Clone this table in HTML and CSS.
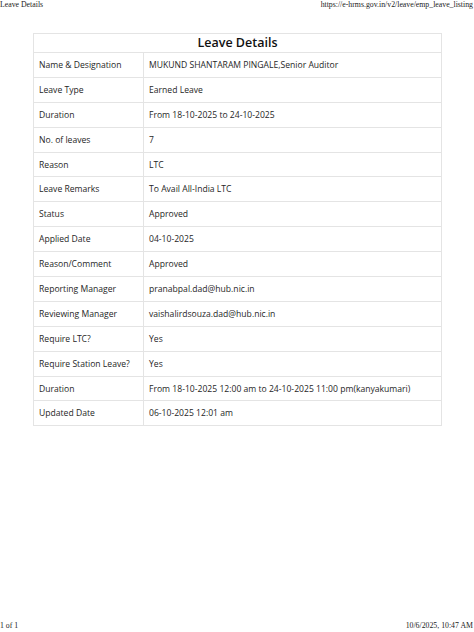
FILE: index.html
```html
<!DOCTYPE html>
<html>
<head>
<meta charset="utf-8">
<link rel="stylesheet" href="styles.css">
</head>
<body>
<div class="page">
  <header class="print-head">
    <span>Leave Details</span>
    <span class="url">https://e-hrms.gov.in/v2/leave/emp_leave_listing</span>
  </header>
  <main class="content">
    <table class="details">
      <tr><th colspan="2" class="title">Leave Details</th></tr>
      <tr><td class="label">Name &amp; Designation</td><td>MUKUND SHANTARAM PINGALE,Senior Auditor</td></tr>
      <tr><td class="label">Leave Type</td><td>Earned Leave</td></tr>
      <tr><td class="label">Duration</td><td>From 18-10-2025 to 24-10-2025</td></tr>
      <tr><td class="label">No. of leaves</td><td>7</td></tr>
      <tr><td class="label">Reason</td><td>LTC</td></tr>
      <tr><td class="label">Leave Remarks</td><td>To Avail All-India LTC</td></tr>
      <tr><td class="label">Status</td><td>Approved</td></tr>
      <tr><td class="label">Applied Date</td><td>04-10-2025</td></tr>
      <tr><td class="label">Reason/Comment</td><td>Approved</td></tr>
      <tr><td class="label">Reporting Manager</td><td>pranabpal.dad@hub.nic.in</td></tr>
      <tr><td class="label">Reviewing Manager</td><td>vaishalirdsouza.dad@hub.nic.in</td></tr>
      <tr><td class="label">Require LTC?</td><td>Yes</td></tr>
      <tr><td class="label">Require Station Leave?</td><td>Yes</td></tr>
      <tr><td class="label">Duration</td><td>From 18-10-2025 12:00 am to 24-10-2025 11:00 pm(kanyakumari)</td></tr>
      <tr><td class="label">Updated Date</td><td>06-10-2025 12:01 am</td></tr>
    </table>
  </main>
  <footer class="print-foot">
    <span>1 of 1</span>
    <span>10/6/2025, 10:47 AM</span>
  </footer>
</div>
</body>
</html>
```
FILE: styles.css
```css
html, body {
  margin: 0;
  padding: 0;
  background: #fff;
}
.page {
  width: 474px;
  height: 632px;
  display: flex;
  flex-direction: column;
  overflow: hidden;
}
.print-head, .print-foot {
  display: flex;
  justify-content: space-between;
  font-family: "Liberation Serif", serif;
  font-size: 7.8px;
  color: #222;
  white-space: nowrap;
  padding: 0 1px 0 0;
}
.print-head {
  height: 33px;
  line-height: 10px;
}
.content {
  flex: 1;
  padding-left: 33px;
}
.print-foot {
  height: 12px;
  line-height: 12px;
  align-items: flex-end;
}
.details {
  border-collapse: collapse;
  width: 409px;
  font-family: "Open Sans", sans-serif;
  font-size: 8.6px;
  color: #262626;
}
.details th, .details td {
  border: 1px solid #e4e4e4;
  text-align: left;
  padding: 0 5px;
  height: 23.9px;
  white-space: nowrap;
}
.details .title {
  text-align: center;
  font-size: 12.5px;
  font-weight: 600;
  color: #111;
  height: 18px;
  line-height: 18px;
}
.details .label {
  width: 99px;
}
```
